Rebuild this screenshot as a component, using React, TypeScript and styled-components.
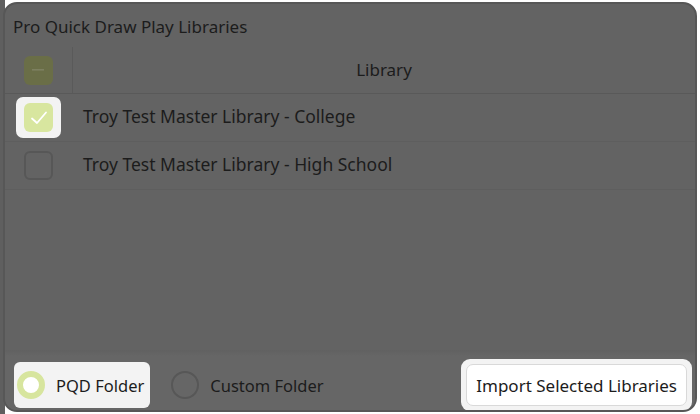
import styled, { createGlobalStyle } from "styled-components";

const GlobalStyle = createGlobalStyle`
  html, body {
    margin: 0;
    padding: 0;
    background: #ffffff;
  }
  body {
    font-family: "Noto Sans", "DejaVu Sans", sans-serif;
  }
`;

const Backdrop = styled.div`
  width: 700px;
  height: 414px;
  box-sizing: border-box;
  padding: 2px 3px 2px 3px;
  background: linear-gradient(to right, #5f5f5f 0, #5f5f5f 5px, #ffffff 5px);
`;

const Window = styled.div`
  height: 100%;
  box-sizing: border-box;
  border: 2px solid #575757;
  border-radius: 14px;
  background: #636363;
  color: #1c1c1c;
  display: flex;
  flex-direction: column;
  overflow: hidden;
`;

const Title = styled.div`
  font-size: 17px;
  padding: 11px 0 0 8px;
  height: 43px;
  box-sizing: border-box;
`;

const Table = styled.div`
  flex: 1;
  display: flex;
  flex-direction: column;
`;

const Row = styled.div<{ $header?: boolean }>`
  display: grid;
  grid-template-columns: 68px 1fr;
  height: ${(p) => (p.$header ? "46px" : "47px")};
  border-bottom: 1px solid ${(p) => (p.$header ? "#595959" : "#5e5e5e")};
  align-items: center;
`;

const CheckCell = styled.div<{ $divider?: boolean }>`
  height: 100%;
  display: flex;
  align-items: center;
  justify-content: center;
  border-right: ${(p) => (p.$divider ? "1px solid #5a5a5a" : "none")};
  padding-right: 1px;
  box-sizing: border-box;
`;

const Spotlight = styled.div`
  background: #f3f3f3;
  border-radius: 7px;
  padding: 6px 8px;
  display: flex;
  align-items: center;
`;

const CheckBox = styled.div<{ $state: "on" | "off" | "mixed" }>`
  width: 29px;
  height: 29px;
  box-sizing: border-box;
  border-radius: 6px;
  display: flex;
  align-items: center;
  justify-content: center;
  background: ${(p) =>
    p.$state === "on" ? "#d8e69f" : p.$state === "mixed" ? "#6a6e47" : "transparent"};
  border: ${(p) => (p.$state === "off" ? "2px solid #575757" : "none")};
`;

const HeaderLabel = styled.div`
  text-align: center;
  font-size: 17px;
  margin-top: -2px;
`;

const RowLabel = styled.div`
  font-size: 17.5px;
  padding-left: 10px;
  margin-top: -3px;
`;

const Footer = styled.div`
  height: 60px;
  box-sizing: border-box;
  display: flex;
  align-items: center;
  padding: 10px 3px 0 9px;
  background: linear-gradient(to bottom, #616161 0, #666666 6px, #666666 100%);
`;

const RadioOption = styled.div<{ $lit?: boolean }>`
  display: flex;
  align-items: center;
  gap: 11px;
  height: 46px;
  padding: 0 6px 0 3px;
  margin-right: 18px;
  border-radius: 6px;
  background: ${(p) => (p.$lit ? "#f3f3f3" : "transparent")};
  font-size: 16.5px;
`;

const RadioDot = styled.div<{ $on?: boolean }>`
  width: 28px;
  height: 28px;
  box-sizing: border-box;
  border-radius: 50%;
  border: ${(p) => (p.$on ? "6px solid #d7e59e" : "2px solid #575757")};
  background: ${(p) => (p.$on ? "#ffffff" : "transparent")};
`;

const ButtonWrap = styled.div`
  margin-left: auto;
  padding: 5px;
  border-radius: 9px;
  background: #f3f3f3;
`;

const ImportButton = styled.button`
  font-family: inherit;
  font-size: 17px;
  color: #1c1c1c;
  height: 42px;
  padding: 0 9px;
  border: 1px solid #d9d9d9;
  border-radius: 7px;
  background: #ffffff;
`;

const Check = () => (
  <svg width="20" height="20" viewBox="0 0 20 20">
    <path d="M3 10.5 L8 15 L17 4.5" fill="none" stroke="#ffffff" strokeWidth="1.8" strokeLinecap="round" strokeLinejoin="round" />
  </svg>
);

const Dash = () => (
  <svg width="16" height="4" viewBox="0 0 16 4">
    <rect x="2" y="1" width="12" height="1.6" fill="#7d8060" />
  </svg>
);

const libraries = [
  { name: "Troy Test Master Library - College", selected: true },
  { name: "Troy Test Master Library - High School", selected: false },
];

export default function App() {
  return (
    <>
      <GlobalStyle />
      <Backdrop>
        <Window>
          <Title>Pro Quick Draw Play Libraries</Title>
          <Table>
            <Row $header>
              <CheckCell $divider>
                <CheckBox $state="mixed">
                  <Dash />
                </CheckBox>
              </CheckCell>
              <HeaderLabel>Library</HeaderLabel>
            </Row>
            {libraries.map((lib) => (
              <Row key={lib.name}>
                <CheckCell>
                  {lib.selected ? (
                    <Spotlight>
                      <CheckBox $state="on">
                        <Check />
                      </CheckBox>
                    </Spotlight>
                  ) : (
                    <CheckBox $state="off" />
                  )}
                </CheckCell>
                <RowLabel>{lib.name}</RowLabel>
              </Row>
            ))}
          </Table>
          <Footer>
            <RadioOption $lit>
              <RadioDot $on />
              PQD Folder
            </RadioOption>
            <RadioOption>
              <RadioDot />
              Custom Folder
            </RadioOption>
            <ButtonWrap>
              <ImportButton>Import Selected Libraries</ImportButton>
            </ButtonWrap>
          </Footer>
        </Window>
      </Backdrop>
    </>
  );
}
